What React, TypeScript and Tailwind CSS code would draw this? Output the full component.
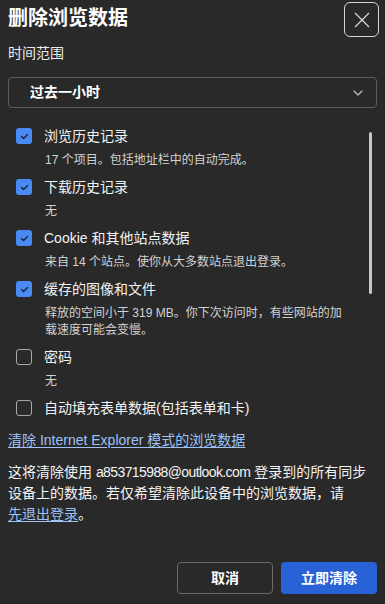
import React from "react";

type Item = { label: string; desc?: React.ReactNode; checked: boolean };

const items: Item[] = [
  { label: "浏览历史记录", desc: "17 个项目。包括地址栏中的自动完成。", checked: true },
  { label: "下载历史记录", desc: "无", checked: true },
  { label: "Cookie 和其他站点数据", desc: "来自 14 个站点。使你从大多数站点退出登录。", checked: true },
  {
    label: "缓存的图像和文件",
    desc: (
      <>
        释放的空间小于 319 MB。你下次访问时，有些网站的加
        <br />
        载速度可能会变慢。
      </>
    ),
    checked: true,
  },
  { label: "密码", desc: "无", checked: false },
  { label: "自动填充表单数据(包括表单和卡)", checked: false },
];

function Checkbox({ checked }: { checked: boolean }) {
  if (checked) {
    return (
      <div className="flex h-4 w-4 shrink-0 items-center justify-center rounded-[3px] bg-[#4a8af4]">
        <svg width="9" height="7" viewBox="0 0 9 7" fill="none">
          <path d="M1.5 3.6 L3.6 5.5 L7.5 1.5" stroke="#1c2333" strokeWidth="1.4" strokeLinecap="round" strokeLinejoin="round" />
        </svg>
      </div>
    );
  }
  return <div className="h-4 w-4 shrink-0 rounded-[3px] border border-[#a8a8a8]" />;
}

export default function App() {
  return (
    <div className="flex h-[604px] w-[385px] flex-col overflow-hidden bg-[#292929] px-2 font-['Liberation_Sans','Noto_Sans_CJK_SC',sans-serif] text-white">
      <div className="-mr-[2px] flex items-start justify-between pt-[2px]">
        <div className="mt-[2px] text-[20px] font-bold leading-[28px] text-white">删除浏览数据</div>
        <button className="flex h-[35px] w-[35px] items-center justify-center rounded-[6px] border-[1.5px] border-[#d4d4d4]">
          <svg width="16" height="16" viewBox="0 0 16 16" fill="none">
            <path d="M1 1 L15 15 M15 1 L1 15" stroke="#e0e0e0" strokeWidth="1.1" />
          </svg>
        </button>
      </div>

      <div className="mt-[6px] text-[14px] leading-[20px] text-[#ececec]">时间范围</div>

      <div className="mt-[14px] flex h-[31px] items-center justify-between rounded-[4px] border border-[#5c5c5c] pl-[21px] pr-[13px]">
        <span className="text-[14px] font-bold text-white">过去一小时</span>
        <svg width="10" height="6" viewBox="0 0 10 6" fill="none">
          <path d="M1 1 L5 5 L9 1" stroke="#bdbdbd" strokeWidth="1.2" strokeLinecap="round" strokeLinejoin="round" />
        </svg>
      </div>

      <div className="mt-[8px] flex h-[306px] overflow-hidden">
        <div className="flex flex-1 flex-col pl-2 pt-[10px]">
          {items.map((it, i) => (
            <div key={i} className="pb-[8px]">
              <div className="flex h-[20px] items-center gap-3">
                <Checkbox checked={it.checked} />
                <span className="whitespace-nowrap text-[14px] leading-[20px] text-[#f2f2f2]">{it.label}</span>
              </div>
              {it.desc && (
                <div className="mt-[6px] whitespace-nowrap pl-[29px] text-[12px] leading-[17px] text-[#d2d2d2]">{it.desc}</div>
              )}
            </div>
          ))}
        </div>
        <div className="mr-[5px] w-[3px]">
          <div className="mt-[16px] h-[162px] w-[3px] rounded-full bg-[#c6c6c6]" />
        </div>
      </div>

      <a className="mt-[8px] whitespace-nowrap text-[14px] leading-[20px] text-[#9fc2f6] underline underline-offset-2">
        清除 Internet Explorer 模式的浏览数据
      </a>

      <div className="mt-[12px] text-[14px] leading-[21px] text-[#f4f4f4]">
        <div className="whitespace-nowrap">
          这将清除使用 <span className="tracking-[-0.6px]">a853715988@outlook.com</span> 登录到的所有同步
        </div>
        <div className="whitespace-nowrap">设备上的数据。若仅希望清除此设备中的浏览数据，请</div>
        <div className="whitespace-nowrap">
          <span className="text-[#9fc2f6] underline underline-offset-2">先退出登录</span>。
        </div>
      </div>

      <div className="mt-auto flex justify-end gap-2 pb-[10px]">
        <button className="h-[32px] w-[96px] rounded-[4px] border border-[#6a6a6a] text-[14px] font-bold text-white">取消</button>
        <button className="h-[32px] w-[96px] rounded-[4px] bg-[#2862d6] text-[14px] font-bold text-white">立即清除</button>
      </div>
    </div>
  );
}
